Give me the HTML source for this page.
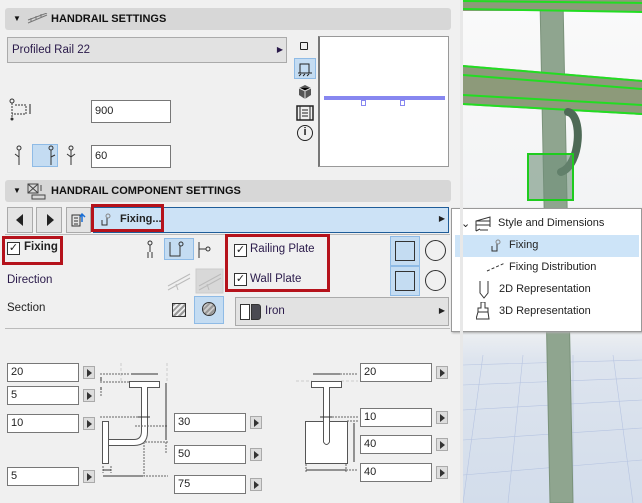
<!DOCTYPE html>
<html><head><meta charset="utf-8"><style>
*{box-sizing:border-box;margin:0;padding:0}
body{width:642px;height:503px;overflow:hidden;background:#f0f0f0;font-family:"Liberation Sans",sans-serif;font-size:11.5px;color:#222;position:relative}
.a{position:absolute}
.hdr{position:absolute;left:5px;width:446px;height:22px;background:#d7d7d7;border-radius:3px;font-weight:bold;font-size:11px;line-height:22px;color:#111}
.inp{position:absolute;background:#fff;border:1px solid #777;height:19px;font-size:11px;line-height:17px;padding-left:3px}
.ab{position:absolute;width:12px;height:13px;background:#ddd;border:1px solid #aaa}
.ab:after{content:"";position:absolute;left:3px;top:2px;border-left:5px solid #333;border-top:4px solid transparent;border-bottom:4px solid transparent}
.red{position:absolute;border:3px solid #b5121b}
.btn{position:absolute;background:#e4e4e4;border:1px solid #aaa}
.sel{background:#c4dcf2;border:1px solid #8fbbe6}
.chk{position:absolute;width:13px;height:13px;border:1px solid #333;background:#fff;font-size:11px;line-height:11px;text-align:center}
</style></head><body>
<div class="a" style="left:463px;top:0;width:179px;height:503px;background:linear-gradient(#fafafa 0,#eef0f2 330px,#dde4ee 360px,#d3ddeb 503px)"></div>
<svg class="a" style="left:463px;top:0" width="179" height="503">
<g stroke="#a8b8dc" stroke-width="0.6" opacity="0.7">
<line x1="0" y1="365" x2="179" y2="360"/><line x1="0" y1="385" x2="179" y2="378"/><line x1="0" y1="410" x2="179" y2="400"/><line x1="0" y1="440" x2="179" y2="428"/><line x1="0" y1="475" x2="179" y2="460"/>
<line x1="20" y1="355" x2="0" y2="503"/><line x1="60" y1="355" x2="45" y2="503"/><line x1="110" y1="355" x2="110" y2="503"/><line x1="150" y1="355" x2="170" y2="503"/>
</g>
<path d="M77 0 L100 0 L110 503 L87 503 Z" fill="#8fa58f" stroke="#7a927a"/>
<rect x="0" y="0" width="179" height="11" fill="#8d9a7a"/>
<line x1="0" y1="1" x2="179" y2="3" stroke="#22dd22" stroke-width="2"/><line x1="0" y1="9" x2="179" y2="12" stroke="#22dd22" stroke-width="2"/>
<path d="M0 65 L179 80 L179 115 L0 105 Z" fill="#8d9a7a"/>
<path d="M0 66 L179 81 M0 75 L179 89 M0 95 L179 105 M0 104 L179 114" stroke="#22dd22" stroke-width="2"/>
<path d="M105 112 C 120 115, 118 165, 98 172" stroke="#4e6a56" stroke-width="8" fill="none" stroke-linecap="round"/>
<rect x="65" y="154" width="45" height="46" fill="#70907a" fill-opacity="0.6" stroke="#1ecc1e" stroke-width="2"/>
</svg>
<div class="a" style="left:451px;top:208px;width:191px;height:124px;background:#fff;border:1px solid #999;box-shadow:1px 1px 2px #aaa;font-size:11px">
<div class="a" style="left:3px;top:26px;width:184px;height:22px;background:#cde4f8"></div>
<div class="a" style="left:9px;top:8px">⌄</div>
<svg class="a" style="left:22px;top:6px" width="20" height="18"><path d="M2 16 V6 L16 2 V12 M2 6 H16 M2 10 H16 M6 14 L2 16 M6 15 H14" stroke="#333" fill="none"/></svg>
<div class="a" style="left:46px;top:8px">Style and Dimensions</div>
<svg class="a" style="left:38px;top:29px" width="12" height="16"><path d="M2 8 V13 H7 V6" stroke="#333" fill="none"/><circle cx="8" cy="4" r="2" stroke="#888" fill="none"/></svg>
<div class="a" style="left:57px;top:30px">Fixing</div>
<svg class="a" style="left:33px;top:52px" width="24" height="12"><path d="M2 10 L20 2" stroke="#333" stroke-dasharray="3 2"/></svg>
<div class="a" style="left:57px;top:52px">Fixing Distribution</div>
<svg class="a" style="left:26px;top:72px" width="12" height="20"><path d="M2 0 V12 L6 17 L10 12 V0" stroke="#333" fill="none"/></svg>
<div class="a" style="left:47px;top:74px">2D Representation</div>
<svg class="a" style="left:24px;top:93px" width="16" height="18"><path d="M5 0 H9 V6 H12 V10 H2 V6 H5 Z M2 10 L0 17 H13 L12 10" stroke="#333" fill="none"/></svg>
<div class="a" style="left:47px;top:96px">3D Representation</div>
</div>
<div class="a" style="left:460px;top:0;width:3px;height:503px;background:#e8e8e8"></div>

<div class="hdr" style="top:8px"><span style="position:absolute;left:8px;top:0;font-size:8px">▼</span><svg class="a" style="left:22px;top:5px" width="22" height="12"><path d="M1 10 L20 2 M1 7 L20 0 M4 9 V5 M9 7 V3 M14 5 V1" stroke="#777"/></svg><span style="position:absolute;left:46px">HANDRAIL SETTINGS</span></div>
<div class="a" style="left:7px;top:37px;width:280px;height:26px;background:#e2e2e2;border:1px solid #aaa;line-height:24px;padding-left:4px;color:#2a1a4a">Profiled Rail 22<span style="position:absolute;right:3px;font-size:8px">▶</span></div>
<div class="a" style="left:300px;top:42px;width:8px;height:8px;border:1px solid #222;border-radius:1px"></div>
<div class="a sel" style="left:294px;top:58px;width:22px;height:21px"></div>
<svg class="a" style="left:297px;top:61px" width="16" height="16"><path d="M3 12 V3 H12 V12 M1 12 H15 M2 15 L4 13 M6 15 L8 13 M10 15 L12 13" stroke="#222" fill="none"/></svg>
<svg class="a" style="left:297px;top:84px" width="16" height="16"><path d="M8 1 L14 4 V11 L8 15 L2 11 V4 Z" fill="#555"/><path d="M2 4 L8 7 L14 4 M8 7 V15" stroke="#ddd"/></svg>
<svg class="a" style="left:296px;top:105px" width="18" height="16"><rect x="1" y="1" width="16" height="14" fill="none" stroke="#222" stroke-width="1.5"/><path d="M4 1 V15 M14 1 V15 M6 5 H12 M6 8 H12 M6 11 H12" stroke="#222"/></svg>
<div class="a" style="left:297px;top:125px;width:16px;height:16px;border:1.5px solid #222;border-radius:50%;text-align:center;font-size:11px;line-height:13px;font-weight:bold">i</div>
<div class="a" style="left:318px;top:36px;width:131px;height:131px;background:#fff;border:1px solid #999;border-left:2px solid #777"></div>
<div class="a" style="left:324px;top:96px;width:121px;height:4px;background:#8787f0"></div>
<div class="a" style="left:361px;top:100px;width:5px;height:6px;border:1px solid #8787f0"></div>
<div class="a" style="left:400px;top:100px;width:5px;height:6px;border:1px solid #8787f0"></div>
<svg class="a" style="left:8px;top:98px" width="24" height="24"><circle cx="4" cy="3" r="2" fill="none" stroke="#333"/><path d="M4 5 V19 M7 7 H18 V16 H4" stroke="#333" fill="none" stroke-dasharray="2 1"/><path d="M22 6 V16" stroke="#222"/><circle cx="4" cy="21" r="1.5" fill="#333"/></svg>
<div class="inp" style="left:91px;top:100px;width:80px;height:23px;line-height:21px">900</div>
<div class="a sel" style="left:32px;top:144px;width:26px;height:23px"></div>
<svg class="a" style="left:10px;top:145px" width="70" height="22"><g stroke="#333" fill="none"><circle cx="9" cy="3" r="2"/><path d="M9 5 V20 M9 12 L5 9"/><circle cx="41" cy="3" r="2"/><path d="M41 5 V20 M41 12 L45 10"/><circle cx="61" cy="3" r="2"/><path d="M61 5 V20 M61 12 L57 9 M61 12 L65 9"/></g></svg>
<div class="inp" style="left:91px;top:145px;width:80px;height:23px;line-height:21px">60</div>

<div class="hdr" style="top:180px"><span style="position:absolute;left:8px;top:0;font-size:8px">▼</span><svg class="a" style="left:22px;top:3px" width="20" height="17"><rect x="1" y="1" width="10" height="9" fill="none" stroke="#444"/><path d="M1 1 L11 10 M11 1 L1 10 M5 12 H18 V16 H5 Z M14 2 V8" stroke="#444" fill="none"/></svg><span style="position:absolute;left:46px">HANDRAIL COMPONENT SETTINGS</span></div>
<div class="btn" style="left:7px;top:207px;width:26px;height:26px"><span class="a" style="left:8px;top:6px;border-right:7px solid #222;border-top:6px solid transparent;border-bottom:6px solid transparent"></span></div>
<div class="btn" style="left:36px;top:207px;width:26px;height:26px"><span class="a" style="left:10px;top:6px;border-left:7px solid #222;border-top:6px solid transparent;border-bottom:6px solid transparent"></span></div>
<div class="btn" style="left:66px;top:207px;width:25px;height:26px"><svg class="a" style="left:3px;top:4px" width="18" height="16"><path d="M2 3 H10 V14 H2 Z M4 6 H8 M4 9 H8 M4 12 H8" stroke="#333" fill="none"/><path d="M12 10 V3 M10 5 L12 2 L15 5" stroke="#1b6fd6" fill="none" stroke-width="1.5"/></svg></div>
<div class="a" style="left:93px;top:207px;width:356px;height:26px;background:#cce2f6;border:1.5px solid #1f5d99"><span style="position:absolute;right:3px;top:6px;font-size:8px">▶</span></div>
<svg class="a" style="left:100px;top:212px" width="12" height="16"><path d="M2 8 V13 H7 V6" stroke="#333" fill="none"/><circle cx="8" cy="4" r="2" stroke="#888" fill="none"/></svg>
<div class="a" style="left:120px;top:213px;font-weight:bold;font-size:11px">Fixing...</div>
<div class="red" style="left:91px;top:204px;width:73px;height:28px"></div>
<div class="a" style="left:5px;top:234px;width:445px;height:1px;background:#bbb"></div>

<div class="chk" style="left:7px;top:242px">✓</div>
<div class="a" style="left:24px;top:241px;font-weight:bold">Fixing</div>
<div class="red" style="left:2px;top:236px;width:61px;height:29px"></div>
<div class="a sel" style="left:164px;top:238px;width:30px;height:22px"></div>
<svg class="a" style="left:143px;top:240px" width="70" height="20"><g stroke="#333" fill="none"><circle cx="7" cy="3" r="2"/><path d="M7 5 V12 M5 12 V18 M9 12 V18"/><path d="M27 2 V16 H37 V6"/><circle cx="38" cy="4" r="2"/><path d="M56 2 V18 M56 9 H63"/><circle cx="65" cy="9" r="2"/></g></svg>
<div class="a" style="left:7px;top:274px;color:#2a1a4a">Direction</div>
<svg class="a" style="left:166px;top:268px" width="58" height="26"><rect x="30" y="1" width="27" height="24" fill="#d8d8d8" stroke="#ccc"/><path d="M2 18 L24 6 M2 22 L24 10 M10 16 L12 22 M33 18 L55 6 M33 22 L55 10 M41 16 L43 22" stroke="#bbb"/></svg>
<div class="a" style="left:7px;top:302px;color:#222">Section</div>
<div class="a" style="left:172px;top:303px;width:14px;height:14px;border:1px solid #333;background:repeating-linear-gradient(135deg,#999 0 2px,#eee 2px 4px)"></div>
<div class="a sel" style="left:194px;top:296px;width:30px;height:28px"></div>
<div class="a" style="left:202px;top:302px;width:14px;height:14px;border:1px solid #333;border-radius:50%;background:repeating-linear-gradient(135deg,#999 0 2px,#ccc 2px 4px)"></div>

<div class="chk" style="left:234px;top:244px">✓</div>
<div class="a" style="left:250px;top:243px;color:#2a1a4a">Railing Plate</div>
<div class="chk" style="left:234px;top:273px">✓</div>
<div class="a" style="left:250px;top:273px;color:#2a1a4a">Wall Plate</div>
<div class="red" style="left:225px;top:234px;width:105px;height:58px"></div>
<div class="a sel" style="left:390px;top:236px;width:30px;height:30px"><div class="a" style="left:4px;top:4px;width:20px;height:20px;border:1px solid #333"></div></div>
<div class="a" style="left:425px;top:240px;width:21px;height:21px;border:1px solid #333;border-radius:50%"></div>
<div class="a sel" style="left:390px;top:266px;width:30px;height:30px"><div class="a" style="left:4px;top:4px;width:20px;height:20px;border:1px solid #333"></div></div>
<div class="a" style="left:425px;top:270px;width:21px;height:21px;border:1px solid #333;border-radius:50%"></div>
<div class="a" style="left:235px;top:297px;width:214px;height:29px;background:#e2e2e2;border:1px solid #aaa"><div class="a" style="left:4px;top:6px;width:10px;height:16px;border:1px solid #333;background:#fff"></div><div class="a" style="left:15px;top:6px;width:10px;height:16px;border:1px solid #333;background:#4a4a52;border-radius:0 3px 3px 0"></div><span class="a" style="left:29px;top:7px;color:#2a1a4a">Iron</span><span class="a" style="right:3px;top:8px;font-size:8px">▶</span></div>
<div class="a" style="left:5px;top:328px;width:445px;height:1px;background:#bbb"></div>

<svg class="a" style="left:0;top:340px" width="460" height="163">
<g stroke="#ccc" stroke-dasharray="3 2"><path d="M121 23 V43 M167 23 V43 M296 41 H312 M341 41 H358"/></g>
<g stroke="#555" fill="#fff"><rect x="129.5" y="41.5" width="30" height="6"/><path d="M141.5 47 V91 Q141.5 99.5 134 99.5 H108 V105.5 H134 Q147.5 105.5 147.5 92 V47"/><rect x="102.5" y="81.5" width="6" height="42"/>
<rect x="311.5" y="41.5" width="30" height="6"/><rect x="305.5" y="81.5" width="42" height="42"/><path d="M323.5 47 V102 Q326.5 107 329.5 102 V47"/></g>
<g stroke="#666" fill="none" stroke-dasharray="2 1"><path d="M100 34 H130 M100 42 H129 M101 51 V56 M100 77 H138 M135 86 H168 M145 102 H168 M144 102 V136 H168 M166 102 V113 M103 126 V133 M111 126 V133 M340 34 H358 M332 77 H358 M347 81 H358 M346 130 H358 M306 124 V132 M346 124 V132"/></g>
<g stroke="#333"><path d="M131 34 H158 M101 37 V41 M101 47 V50 M138 77 H150 M166 43 V100 M103 130 H111 M103 136 H143 M313 34 H340 M320 77 H332 M354 83 V122 M306 130 H346"/></g>
</svg>
<div class="inp" style="left:7px;top:363px;width:72px">20</div><div class="ab" style="left:83px;top:366px"></div>
<div class="inp" style="left:7px;top:386px;width:72px">5</div><div class="ab" style="left:83px;top:389px"></div>
<div class="inp" style="left:7px;top:414px;width:72px">10</div><div class="ab" style="left:83px;top:417px"></div>
<div class="inp" style="left:7px;top:467px;width:72px">5</div><div class="ab" style="left:83px;top:470px"></div>
<div class="inp" style="left:174px;top:413px;width:72px">30</div><div class="ab" style="left:250px;top:416px"></div>
<div class="inp" style="left:174px;top:445px;width:72px">50</div><div class="ab" style="left:250px;top:448px"></div>
<div class="inp" style="left:174px;top:475px;width:72px">75</div><div class="ab" style="left:250px;top:478px"></div>
<div class="inp" style="left:360px;top:363px;width:72px">20</div><div class="ab" style="left:436px;top:366px"></div>
<div class="inp" style="left:360px;top:408px;width:72px">10</div><div class="ab" style="left:436px;top:411px"></div>
<div class="inp" style="left:360px;top:435px;width:72px">40</div><div class="ab" style="left:436px;top:438px"></div>
<div class="inp" style="left:360px;top:463px;width:72px">40</div><div class="ab" style="left:436px;top:466px"></div>
</body></html>
